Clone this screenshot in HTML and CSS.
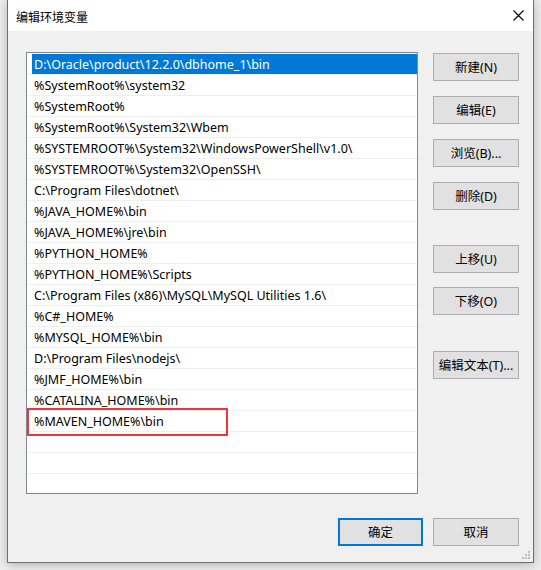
FILE: index.html
```html
<!DOCTYPE html>
<html lang="zh-CN">
<head>
  <meta charset="UTF-8" />
  <meta name="viewport" content="width=device-width, initial-scale=1.0"/>
  <title>编辑环境变量</title>
  <link rel="stylesheet" href="styles.css">
</head>
<body>
  <div class="janela">
    <div class="barra-titulo">
      <span class="titulo">编辑环境变量</span>
      <button class="fechar" aria-label="关闭">
        <svg width="11" height="11" viewBox="0 0 11 11">
          <path d="M0.5 0.5 L10.5 10.5 M10.5 0.5 L0.5 10.5" stroke="#000" stroke-width="1.1" fill="none"/>
        </svg>
      </button>
    </div>

    <div class="corpo">
      <div class="area-principal">
        <div class="lista">
          <div class="linha selecionada"><span>D:\Oracle\product\12.2.0\dbhome_1\bin</span></div>
          <div class="linha"><span>%SystemRoot%\system32</span></div>
          <div class="linha"><span>%SystemRoot%</span></div>
          <div class="linha"><span>%SystemRoot%\System32\Wbem</span></div>
          <div class="linha"><span>%SYSTEMROOT%\System32\WindowsPowerShell\v1.0\</span></div>
          <div class="linha"><span>%SYSTEMROOT%\System32\OpenSSH\</span></div>
          <div class="linha"><span>C:\Program Files\dotnet\</span></div>
          <div class="linha"><span>%JAVA_HOME%\bin</span></div>
          <div class="linha"><span>%JAVA_HOME%\jre\bin</span></div>
          <div class="linha"><span>%PYTHON_HOME%</span></div>
          <div class="linha"><span>%PYTHON_HOME%\Scripts</span></div>
          <div class="linha"><span>C:\Program Files (x86)\MySQL\MySQL Utilities 1.6\</span></div>
          <div class="linha"><span>%C#_HOME%</span></div>
          <div class="linha"><span>%MYSQL_HOME%\bin</span></div>
          <div class="linha"><span>D:\Program Files\nodejs\</span></div>
          <div class="linha"><span>%JMF_HOME%\bin</span></div>
          <div class="linha"><span>%CATALINA_HOME%\bin</span></div>
          <div class="linha"><span>%MAVEN_HOME%\bin</span></div>
          <div class="linha"></div>
          <div class="linha"></div>
          <div class="linha"></div>
          <!-- destaque vermelho em volta da entrada nova -->
          <div class="destaque"></div>
        </div>

        <div class="botoes">
          <div class="grupo">
            <button class="btn">新建(N)</button>
            <button class="btn">编辑(E)</button>
            <button class="btn">浏览(B)...</button>
            <button class="btn">删除(D)</button>
          </div>
          <div class="grupo grupo-mover">
            <button class="btn">上移(U)</button>
            <button class="btn">下移(O)</button>
          </div>
          <div class="grupo grupo-texto">
            <button class="btn">编辑文本(T)...</button>
          </div>
        </div>
      </div>

      <div class="rodape">
        <button class="btn padrao">确定</button>
        <button class="btn">取消</button>
      </div>
    </div>

    <svg class="alca" width="8" height="8" viewBox="0 0 8 8">
      <rect x="6" y="0" width="2" height="2" fill="#bdbdbd"/>
      <rect x="3" y="3" width="2" height="2" fill="#bdbdbd"/>
      <rect x="6" y="3" width="2" height="2" fill="#bdbdbd"/>
      <rect x="0" y="6" width="2" height="2" fill="#bdbdbd"/>
      <rect x="3" y="6" width="2" height="2" fill="#bdbdbd"/>
      <rect x="6" y="6" width="2" height="2" fill="#bdbdbd"/>
    </svg>
  </div>
</body>
</html>
```

FILE: styles.css
```css
:root {
  --azul: #0078d7;
  --fundo-janela: #f0f0f0;
  --borda-lista: #828790;
  --borda-botao: #adadad;
  --fundo-botao: #e1e1e1;
  --separador: #efefef;
}

* {
  margin: 0;
  padding: 0;
  box-sizing: border-box;
}

body {
  font-family: 'Noto Sans', 'Noto Sans CJK SC', sans-serif;
  font-size: 12px;
  color: #000;
  background-color: #eeeeee;
  height: 570px;
  overflow: hidden;
}

.janela {
  position: relative;
  width: 527px;
  margin: -1px 0 0 7px;
  background-color: var(--fundo-janela);
  border: 1px solid #6e6e6e;
  box-shadow: 0 2px 10px rgba(0, 0, 0, 0.25);
}

.barra-titulo {
  height: 31px;
  background-color: #fff;
  display: flex;
  align-items: center;
  justify-content: space-between;
  padding-left: 8px;
}

.titulo {
  font-family: 'Noto Sans CJK SC', sans-serif;
  font-size: 12px;
  padding-top: 1px;
}

.fechar {
  width: 30px;
  height: 31px;
  border: none;
  background: transparent;
  display: flex;
  align-items: center;
  justify-content: center;
}

.corpo {
  padding: 21px 14px 16px 18px;
}

.area-principal {
  display: flex;
  gap: 15px;
}

.lista {
  position: relative;
  width: 392px;
  height: 442px;
  background-color: #fff;
  border: 1px solid var(--borda-lista);
  padding-top: 1px;
  overflow: hidden;
}

.linha {
  height: 21px;
  border-bottom: 1px solid var(--separador);
  display: flex;
}

.linha span {
  display: flex;
  align-items: center;
  flex: 1;
  padding: 1px 0 0 7px;
  font-size: 12.5px;
  white-space: nowrap;
  line-height: 19px;
}

.linha.selecionada span {
  margin-left: 5px;
  padding-left: 2px;
  background-color: var(--azul);
  color: #fff;
}

.destaque {
  position: absolute;
  left: 0;
  top: 355px;
  width: 201px;
  height: 28px;
  border: 2px solid #e8383d;
}

.botoes {
  width: 86px;
  padding-top: 1px;
  display: flex;
  flex-direction: column;
}

.grupo {
  display: flex;
  flex-direction: column;
  gap: 15px;
}

.grupo-mover {
  margin-top: 35px;
  gap: 14px;
}

.grupo-texto {
  margin-top: 36px;
}

.btn {
  width: 86px;
  height: 28px;
  padding-bottom: 2px;
  background-color: var(--fundo-botao);
  border: 1px solid var(--borda-botao);
  font-family: 'Noto Sans', 'Noto Sans CJK SC', sans-serif;
  font-size: 12.5px;
  color: #000;
  white-space: nowrap;
}

.btn.padrao {
  border: 2px solid var(--azul);
  width: 85px;
}

.rodape {
  margin-top: 24px;
  display: flex;
  justify-content: flex-end;
  gap: 10px;
}

.alca {
  position: absolute;
  right: 3px;
  bottom: 3px;
}
```
